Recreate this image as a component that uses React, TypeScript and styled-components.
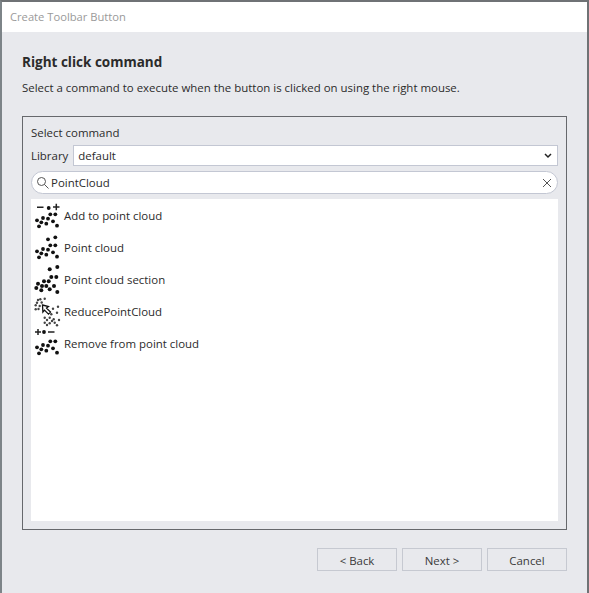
import React from 'react';
import styled, { createGlobalStyle } from 'styled-components';

const Global = createGlobalStyle`
  html, body { margin: 0; padding: 0; background: #e8e9ed; }
  * { box-sizing: border-box; }
`;

const Window = styled.div`
  width: 589px;
  height: 593px;
  display: flex;
  flex-direction: column;
  background: #e8e9ed;
  border-top: 2px solid #6f7275;
  border-left: 2px solid #7d8488;
  border-right: 2px solid #6f7275;
  font-family: "Open Sans", "Noto Sans", sans-serif;
  font-size: 11.45px;
  color: #2b2b2b;
`;

const TitleBar = styled.div`
  height: 30px;
  flex: none;
  background: #fff;
  color: #9a9a9a;
  display: flex;
  align-items: center;
  padding: 0 0 2px 8px;
  font-size: 11.2px;
`;

const Body = styled.div`
  flex: 1;
  display: flex;
  flex-direction: column;
  padding: 20px 20px 20px;
`;

const Heading = styled.h1`
  margin: 0;
  font-size: 13.5px;
  font-weight: 700;
  line-height: 20px;
`;

const Description = styled.p`
  margin: 7px 0 0;
  line-height: 18px;
  font-size: inherit;
`;

const Group = styled.section`
  margin-top: 19px;
  height: 414px;
  border: 1px solid #66686c;
  padding: 7px 8px 8px 8px;
  display: flex;
  flex-direction: column;
`;

const GroupLabel = styled.div`
  line-height: 17px;
`;

const LibraryRow = styled.div`
  display: flex;
  align-items: center;
  gap: 5px;
  margin-top: 4px;
`;

const Select = styled.div`
  flex: 1;
  height: 21px;
  background: #fff;
  border: 1px solid #c3c7d3;
  display: flex;
  align-items: center;
  justify-content: space-between;
  padding: 0 5px 0 4px;
`;

const SearchBox = styled.div`
  height: 23px;
  margin-top: 5px;
  background: #fff;
  border: 1px solid #c3c7d3;
  border-radius: 12px;
  display: flex;
  align-items: center;
  padding: 0 5px 0 4px;
  gap: 2px;
`;

const SearchText = styled.span`
  flex: 1;
`;

const List = styled.div`
  flex: 1;
  margin-top: 5px;
  background: #fff;
  padding-top: 1px;
`;

const Row = styled.div`
  height: 32px;
  display: flex;
  align-items: center;
  gap: 1px;
  padding-left: 2px;
`;

const RowLabel = styled.span`
  position: relative;
  top: -1px;
`;

const Footer = styled.div`
  display: flex;
  justify-content: flex-end;
  gap: 5px;
  margin-top: 18px;
`;

const Button = styled.button`
  width: 80px;
  height: 23px;
  background: #e8e9ed;
  border: 1px solid #c6c9d1;
  padding: 1px 0 0;
  font: inherit;
  color: #3a3a3a;
`;

type Dot = [number, number, number?];

const cloud: Dot[] = [
  [17.3, 13.3], [22.3, 13.3], [10, 17], [15, 17.7], [4, 19.3], [8.3, 21.3],
  [13.3, 22.7], [20, 20.3], [24, 24.7], [6, 25.3],
];

const Dots = ({ dots, r = 1.9 }: { dots: Dot[]; r?: number }) => (
  <>
    {dots.map(([x, y, size], i) => <circle key={i} cx={x} cy={y} r={size ?? r} />)}
  </>
);

const IconFrame = ({ children, fill = '#111' }: { children: React.ReactNode; fill?: string }) => (
  <svg width="30" height="32" viewBox="0 0 30 32" fill={fill} style={{ flex: 'none' }}>
    {children}
  </svg>
);

const AddIcon = () => (
  <IconFrame>
    <g transform="translate(0 1)"><Dots dots={cloud} /></g>
    <Dots dots={[[15.7, 8]]} />
    <path d="M4 7.3h6.5M20 7h6.5M23.3 3.7v6.6" stroke="#222" strokeWidth="1.5" fill="none" />
  </IconFrame>
);

const PointIcon = () => (
  <IconFrame>
    <Dots dots={cloud} />
    <Dots dots={[[15, 7.3], [22.3, 5.3]]} />
  </IconFrame>
);

const SectionIcon = () => (
  <IconFrame>
    <Dots
      r={2}
      dots={[[16.7, 5.3], [24.3, 3], [18.3, 13], [23.3, 13], [11, 17.3], [15.7, 17.3], [5, 19.7], [9, 22], [13.3, 22], [21, 22], [3.3, 24], [8.3, 26.3], [16.7, 25.3], [24.3, 28]]}
    />
  </IconFrame>
);

const ReduceIcon = () => (
  <IconFrame fill="#444">
    <Dots
      r={1.2}
      dots={[[2.7, 9.3], [4, 6.7], [7.3, 3.3], [11.7, 2.7], [2.7, 13.3], [6.7, 10], [5, 4], [8.7, 6.5], [5.5, 13],
        [20, 12.7], [25, 10.7], [24, 16.7], [18.3, 18.3], [11.7, 21.7], [16.7, 21.7], [20.7, 23.3], [26, 24],
        [11.7, 26.7], [16.7, 27.3], [21.7, 26.7], [24, 29.3], [14, 24], [19, 25], [14, 29]]}
    />
    <path d="M9.5 9l6 1.5-2 1.6 4 4-2 2-4-4-1.6 2z" fill="#fff" stroke="#111" strokeWidth="1.3" />
  </IconFrame>
);

const RemoveIcon = () => (
  <IconFrame>
    <Dots dots={cloud} />
    <Dots dots={[[11, 4]]} />
    <path d="M2 4h6M5 1v6M15 4h6.5" stroke="#222" strokeWidth="1.5" fill="none" />
  </IconFrame>
);

const items: [React.ComponentType, string][] = [
  [AddIcon, 'Add to point cloud'],
  [PointIcon, 'Point cloud'],
  [SectionIcon, 'Point cloud section'],
  [ReduceIcon, 'ReducePointCloud'],
  [RemoveIcon, 'Remove from point cloud'],
];

export default function App() {
  return (
    <Window>
      <Global />
      <TitleBar>Create Toolbar Button</TitleBar>
      <Body>
        <Heading>Right click command</Heading>
        <Description>Select a command to execute when the button is clicked on using the right mouse.</Description>
        <Group>
          <GroupLabel>Select command</GroupLabel>
          <LibraryRow>
            Library
            <Select>
              default
              <svg width="8" height="6" viewBox="0 0 8 6"><path d="M1 1l3 3 3-3" fill="none" stroke="#222" strokeWidth="1.5" /></svg>
            </Select>
          </LibraryRow>
          <SearchBox>
            <svg width="13" height="13" viewBox="0 0 13 13" fill="none" stroke="#555" strokeWidth="1"><circle cx="5.5" cy="5.5" r="4" /><path d="M8.5 8.5l4 4" /></svg>
            <SearchText>PointCloud</SearchText>
            <svg width="10" height="10" viewBox="0 0 10 10" fill="none" stroke="#555" strokeWidth="1"><path d="M1 1l8 8M9 1l-8 8" /></svg>
          </SearchBox>
          <List>
            {items.map(([Icon, label]) => (
              <Row key={label}><Icon /><RowLabel>{label}</RowLabel></Row>
            ))}
          </List>
        </Group>
        <Footer>
          <Button>&lt; Back</Button>
          <Button>Next &gt;</Button>
          <Button>Cancel</Button>
        </Footer>
      </Body>
    </Window>
  );
}
